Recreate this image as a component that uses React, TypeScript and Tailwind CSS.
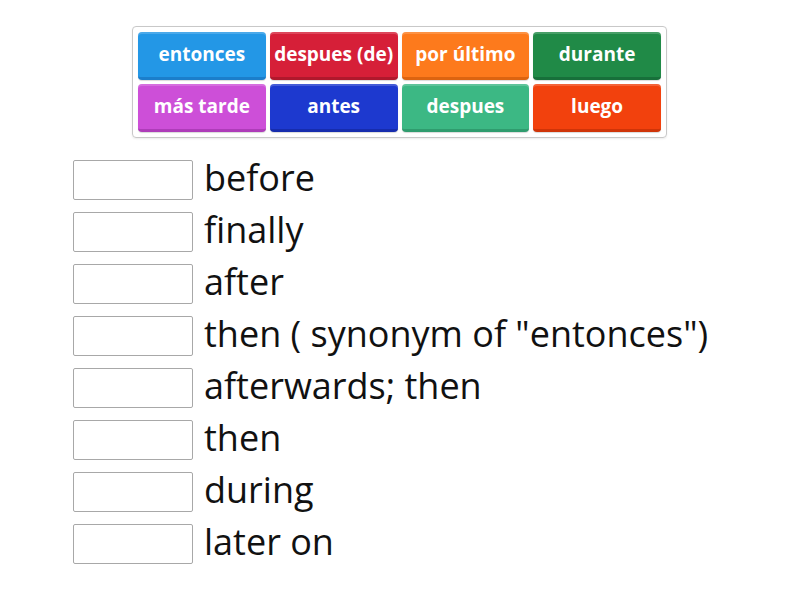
import React from 'react';

type Tile = { label: string; bg: string };

const TILES: Tile[] = [
  { label: 'entonces', bg: 'bg-[#2397e6] border-[#1b7ecb]' },
  { label: 'despues (de)', bg: 'bg-[#d61f38] border-[#b0182c]' },
  { label: 'por último', bg: 'bg-[#fd7a1c] border-[#dc6410]' },
  { label: 'durante', bg: 'bg-[#208a47] border-[#17703a]' },
  { label: 'más tarde', bg: 'bg-[#cd4fd8] border-[#ae3cb9]' },
  { label: 'antes', bg: 'bg-[#1d39cf] border-[#162cad]' },
  { label: 'despues', bg: 'bg-[#3cb884] border-[#2f9c6e]' },
  { label: 'luego', bg: 'bg-[#f2410d] border-[#cf3408]' },
];

const ROWS = [
  'before',
  'finally',
  'after',
  'then ( synonym of "entonces")',
  'afterwards; then',
  'then',
  'during',
  'later on',
];

export default function App() {
  return (
    <div
      className="w-[800px] h-[600px] bg-white pt-[26px]"
      style={{ fontFamily: '"Open Sans", "Liberation Sans", sans-serif' }}
    >
      {/* word bank */}
      <div className="ml-[132px] w-[535px] rounded-[4px] border border-[#c8c8c8] p-[5px] shadow-[0_1px_2px_rgba(0,0,0,0.08)]">
        <div className="grid grid-cols-4 gap-[4px]">
          {TILES.map((t) => (
            <div
              key={t.label}
              className={`${t.bg} h-[48px] rounded-[4px] border-b-[3px] flex items-center justify-center text-white text-[19px] font-bold shadow-[inset_0_2px_0_rgba(255,255,255,0.18),0_1px_1px_rgba(0,0,0,0.15)]`}
            >
              {t.label}
            </div>
          ))}
        </div>
      </div>

      {/* answer rows */}
      <div className="mt-[22px] ml-[73px] flex flex-col gap-[12px]">
        {ROWS.map((r, i) => (
          <div key={i} className="flex items-center h-[40px]">
            <div className="w-[120px] h-[40px] border border-[#a8a8a8] rounded-[2px] bg-white shrink-0" />
            <span className="ml-[11px] -mt-[5px] text-[36px] leading-none text-[#111] whitespace-nowrap">{r}</span>
          </div>
        ))}
      </div>
    </div>
  );
}
